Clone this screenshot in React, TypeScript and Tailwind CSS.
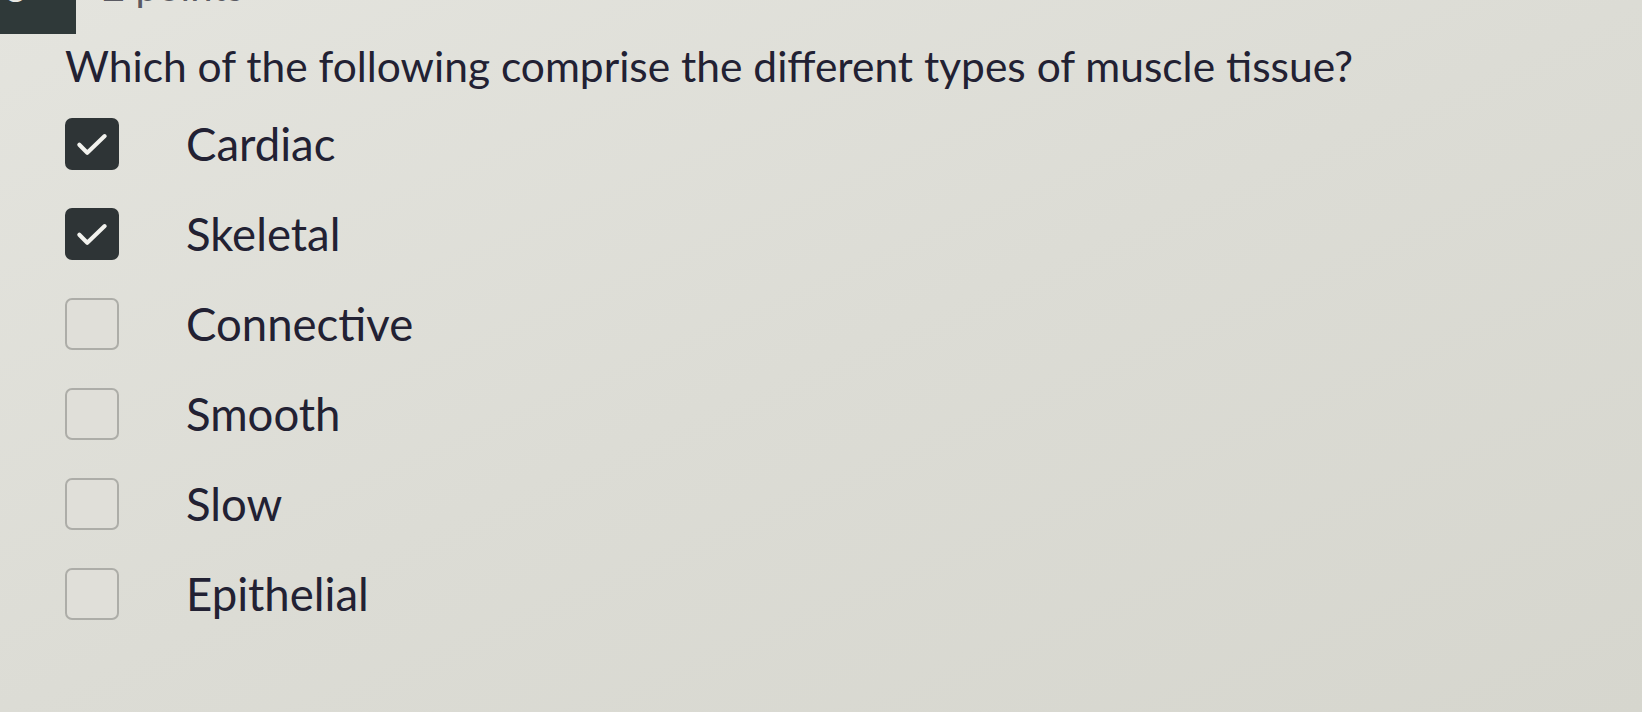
import React from 'react';

const options = [
  { label: 'Cardiac', checked: true },
  { label: 'Skeletal', checked: true },
  { label: 'Connective', checked: false },
  { label: 'Smooth', checked: false },
  { label: 'Slow', checked: false },
  { label: 'Epithelial', checked: false },
];

const Box: React.FC<{ checked: boolean }> = ({ checked }) =>
  checked ? (
    <div className="w-[54px] h-[52px] rounded-[7px] bg-[#2e3436] flex items-center justify-center shrink-0">
      <svg className="w-[38px] h-[38px] text-[#f2f2ee]" fill="none" stroke="currentColor" strokeWidth={2.6} viewBox="0 0 24 24">
        <path strokeLinecap="round" strokeLinejoin="round" d="M4 12.5l5 5L20 7" />
      </svg>
    </div>
  ) : (
    <div className="w-[54px] h-[52px] rounded-[7px] border-2 border-[#adada8] bg-[#e0dfd9] shrink-0" />
  );

export default function App() {
  return (
    <div
      className="w-[1642px] h-[712px] overflow-hidden bg-gradient-to-br from-[#e4e4de] via-[#dcdcd5] to-[#d6d6ce] text-[#222133]"
      style={{ fontFamily: 'Lato, "Open Sans", sans-serif' }}
    >
      <div className="flex items-end h-[34px]">
        <div className="w-[76px] h-[34px] bg-[#2f3939] flex items-end overflow-hidden">
          <span className="ml-[4px] mb-[27px] text-[40px] leading-none font-bold text-[#e8e8e4]">3</span>
        </div>
        <span className="ml-[26px] mb-[28px] text-[40px] leading-none text-[#5a5a62]">2 points</span>
      </div>
      <div className="pl-[65px] pt-[4px]">
        <h1 className="text-[42.5px] leading-[56px] font-normal">
          Which of the following comprise the different types of muscle tissue?
        </h1>
        <div className="mt-[24px] flex flex-col gap-[38px]">
          {options.map((o) => (
            <label key={o.label} className="flex items-center h-[52px]">
              <Box checked={o.checked} />
              <span className="ml-[67px] text-[45.5px] leading-none">{o.label}</span>
            </label>
          ))}
        </div>
      </div>
    </div>
  );
}
